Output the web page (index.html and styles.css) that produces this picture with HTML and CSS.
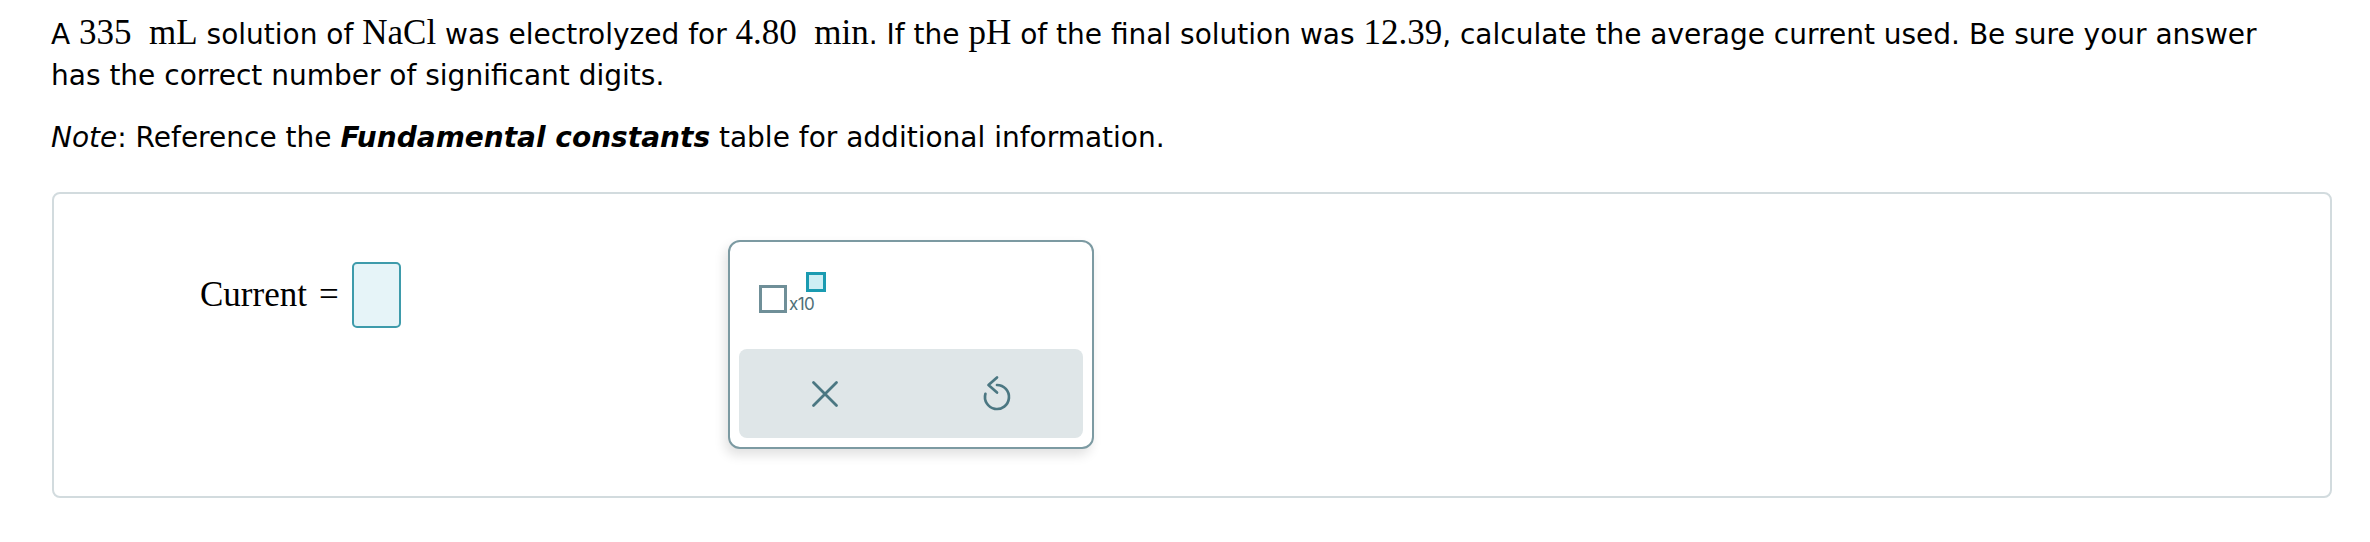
FILE: index.html
```html
<!DOCTYPE html>
<html>
<head>
<meta charset="utf-8">
<link rel="stylesheet" href="styles.css">
</head>
<body>
<div class="page">
  <p class="question"><span class="line">A <span class="math">335&nbsp;&nbsp;mL</span> solution of <span class="math">NaCl</span> was electrolyzed for <span class="math">4.80&nbsp;&nbsp;min</span>. If the <span class="math">pH</span> of the final solution was <span class="math">12.39</span>, calculate the average current used. Be sure your answer</span> <span class="line">has the correct number of significant digits.</span></p>
  <p class="note"><i>Note</i>: Reference the <b><i>Fundamental constants</i></b> table for additional information.</p>
  <div class="answer">
    <div class="eq">
      <span class="label">Current</span>
      <span class="equals">=</span>
      <span class="input"></span>
    </div>
    <div class="palette">
      <div class="tools">
        <div class="sci">
          <span class="base-box"></span>
          <span class="x10">x10</span>
          <span class="exp-box"></span>
        </div>
      </div>
      <div class="actions">
        <button class="btn" aria-label="clear">
          <svg width="28" height="28" viewBox="0 0 28 28"><path d="M2.5 2.5 L25.5 25.5 M25.5 2.5 L2.5 25.5" stroke="#4b7782" stroke-width="2.8" stroke-linecap="round" fill="none"/></svg>
        </button>
        <button class="btn" aria-label="undo">
          <svg width="34" height="40" viewBox="-17 -23 34 40"><path d="M0 -12 A12 12 0 1 1 -11.6 -3.2" stroke="#4b7782" stroke-width="2.7" stroke-linecap="round" fill="none"/><path d="M0 -19.5 L-8.5 -12 L0 -4.5" stroke="#4b7782" stroke-width="2.7" stroke-linecap="round" stroke-linejoin="round" fill="none"/></svg>
        </button>
      </div>
    </div>
  </div>
</div>
</body>
</html>
```
FILE: styles.css
```css
html, body {
  margin: 0;
  padding: 0;
  background: #ffffff;
}
.page {
  padding: 0 30px 0 51px;
  font-family: "DejaVu Sans", Verdana, sans-serif;
  font-size: 28px;
  color: #000;
}
.question {
  margin: 0;
  padding-top: 12px;
  line-height: 41px;
  max-width: 2235px;
}
.line {
  white-space: nowrap;
}
.note {
  margin: 21px 0 0 0;
  line-height: 41px;
}
.math {
  font-family: "Liberation Serif", "Times New Roman", serif;
  font-size: 35px;
}
.answer {
  margin-top: 34px;
  margin-left: 1px;
  width: 2280px;
  height: 306px;
  box-sizing: border-box;
  border: 2px solid #d2dbde;
  border-radius: 8px;
  display: grid;
  grid-template-columns: 528px 366px;
  padding-left: 146px;
  align-items: start;
}
.eq {
  display: flex;
  align-items: center;
  margin-top: 68px;
  font-family: "Liberation Serif", "Times New Roman", serif;
  font-size: 35px;
}
.equals {
  margin-left: 12px;
  margin-right: 13px;
}
.input {
  width: 49px;
  height: 66px;
  box-sizing: border-box;
  border: 2px solid #3e9bab;
  border-radius: 5px;
  background: #e6f4f8;
}
.palette {
  margin-top: 46px;
  width: 366px;
  height: 209px;
  box-sizing: border-box;
  border: 2px solid #7c9aa2;
  border-radius: 12px;
  background: #fff;
  box-shadow: -3px 6px 12px rgba(0,0,0,0.12);
  padding: 0 9px 9px 9px;
  display: flex;
  flex-direction: column;
}
.tools {
  height: 107px;
  padding-left: 20px;
  padding-top: 31px;
  box-sizing: border-box;
}
.sci {
  display: flex;
  align-items: flex-end;
  height: 40px;
}
.base-box {
  width: 28px;
  height: 28px;
  box-sizing: border-box;
  border: 3px solid #6f8f98;
}
.x10 {
  font-family: Inter, "Noto Sans", sans-serif;
  font-size: 17px;
  color: #4f6f78;
  margin-left: 2px;
  line-height: 17px;
  margin-bottom: 0;
  letter-spacing: -0.6px;
}
.exp-box {
  width: 20px;
  height: 20px;
  box-sizing: border-box;
  border: 3px solid #1a9bb1;
  background: #cdeef4;
  align-self: flex-start;
  margin-left: -8px;
  margin-top: -1px;
}
.actions {
  flex: 1;
  background: #dfe6e8;
  border-radius: 8px;
  display: flex;
  align-items: center;
  gap: 132px;
  padding-left: 66px;
}
.btn {
  border: none;
  background: transparent;
  padding: 0;
  display: flex;
  align-items: center;
  justify-content: center;
  width: 40px;
  height: 40px;
}
```
